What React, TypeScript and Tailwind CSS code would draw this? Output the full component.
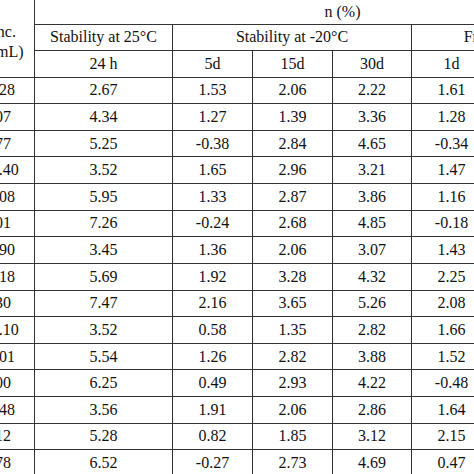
const conc = ['12.28', '5.07', '2.77', '114.40', '25.08', '9.01', '15.90', '20.18', '4.30', '110.10', '50.01', '6.00', '30.48', '8.12', '3.78']

const rows: string[][] = [
  ['2.67', '1.53', '2.06', '2.22', '1.61', '1.72', '2.03'],
  ['4.34', '1.27', '1.39', '3.36', '1.28', '2.41', '3.15'],
  ['5.25', '-0.38', '2.84', '4.65', '-0.34', '2.57', '4.12'],
  ['3.52', '1.65', '2.96', '3.21', '1.47', '2.68', '3.05'],
  ['5.95', '1.33', '2.87', '3.86', '1.16', '2.74', '3.63'],
  ['7.26', '-0.24', '2.68', '4.85', '-0.18', '2.45', '4.37'],
  ['3.45', '1.36', '2.06', '3.07', '1.43', '2.11', '2.96'],
  ['5.69', '1.92', '3.28', '4.32', '2.25', '3.14', '4.08'],
  ['7.47', '2.16', '3.65', '5.26', '2.08', '3.52', '5.01'],
  ['3.52', '0.58', '1.35', '2.82', '1.66', '1.47', '2.63'],
  ['5.54', '1.26', '2.82', '3.88', '1.52', '2.69', '3.74'],
  ['6.25', '0.49', '2.93', '4.22', '-0.48', '2.85', '4.06'],
  ['3.56', '1.91', '2.06', '2.86', '1.64', '2.18', '2.77'],
  ['5.28', '0.82', '1.85', '3.12', '2.15', '1.93', '3.01'],
  ['6.52', '-0.27', '2.73', '4.69', '0.47', '2.61', '4.45'],
]

const cell = 'border-[1.5px] border-[#333333] text-center align-middle p-0 font-normal'

export default function App() {
  return (
    <div className="w-[474px] h-[474px] overflow-hidden bg-white">
      <table
        className="ml-[-40px] w-[690px] table-fixed border-collapse text-[16px] leading-[20px] text-[#111111]"
        style={{ fontFamily: '"Liberation Serif", "Times New Roman", serif' }}
      >
        <colgroup>
          <col className="w-[74.5px]" />
          <col className="w-[138px]" />
          <col className="w-[80px]" />
          <col className="w-[80px]" />
          <col className="w-[79px]" />
          <col className="w-[80px]" />
          <col className="w-[80px]" />
          <col className="w-[78.5px]" />
        </colgroup>
        <thead>
          <tr className="h-[24px]">
            <th rowSpan={3} className={`${cell} border-t-0 border-l-0 pt-[8px]`}>
              Conc.
              <br />
              (ng/mL)
            </th>
            <th colSpan={7} className={`${cell} border-t-0 border-r-0`}>
              n (%)
            </th>
          </tr>
          <tr className="h-[26.5px]">
            <th className={cell}>Stability at 25°C</th>
            <th colSpan={3} className={cell}>
              Stability at -20°C
            </th>
            <th colSpan={3} className={`${cell} border-r-0`}>
              Freeze-thaw stability
            </th>
          </tr>
          <tr className="h-[26.5px]">
            <th className={cell}>24 h</th>
            <th className={cell}>5d</th>
            <th className={cell}>15d</th>
            <th className={cell}>30d</th>
            <th className={cell}>1d</th>
            <th className={cell}>2d</th>
            <th className={`${cell} border-r-0`}>3d</th>
          </tr>
        </thead>
        <tbody>
          {rows.map((r, i) => (
            <tr key={i} className="h-[26.64px]">
              <td className={`${cell} border-l-0`}>{conc[i]}</td>
              {r.map((v, j) => (
                <td key={j} className={j === r.length - 1 ? `${cell} border-r-0` : cell}>
                  {v}
                </td>
              ))}
            </tr>
          ))}
        </tbody>
      </table>
    </div>
  )
}
